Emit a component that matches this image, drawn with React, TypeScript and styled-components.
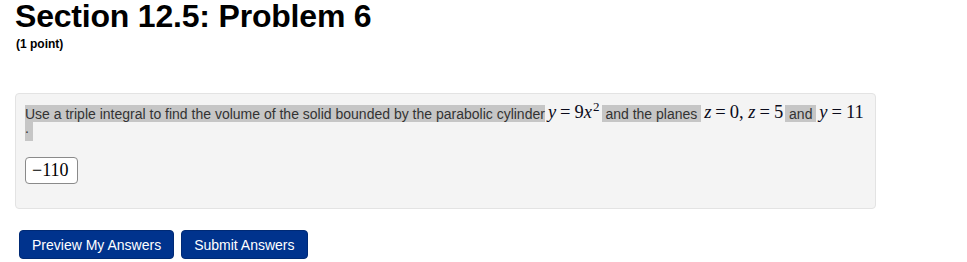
import styled, { createGlobalStyle } from 'styled-components'

const GlobalStyle = createGlobalStyle`
  body {
    margin: 0;
    background: #ffffff;
    font-family: Arial, "Liberation Sans", sans-serif;
    color: #000;
  }
`

const Page = styled.div`
  padding: 0 15px;
`

const Title = styled.h1`
  margin: 0;
  font-size: 32px;
  line-height: 32px;
  font-weight: bold;
  letter-spacing: -0.2px;
`

const Points = styled.div`
  margin-top: 5px;
  padding-left: 1px;
  font-size: 12px;
  font-weight: bold;
  line-height: 14px;
`

const ProblemPanel = styled.div`
  margin-top: 42px;
  width: 861px;
  height: 116px;
  box-sizing: border-box;
  padding: 11px 9px;
  background: #f4f4f4;
  border: 1px solid #e3e3e3;
  border-radius: 4px;
`

const Statement = styled.div`
  font-size: 14px;
  line-height: 17px;
  color: #333;
`

const Marked = styled.span`
  background: #c6c6c6;
  padding: 0.5px 0;
`

const MathText = styled.span`
  font-family: "Liberation Serif", "DejaVu Serif", serif;
  font-size: 18.5px;
  line-height: 0;
  color: #0a0a1a;
  margin: 0 2px 0 3px;
`

const Var = styled.i`
  font-style: italic;
`

const Rel = styled.span`
  margin: 0 4px;
`

const Sup = styled.sup`
  font-size: 13px;
  line-height: 0;
  vertical-align: 0.55em;
  margin-left: 1px;
`

const Dot = styled.div`
  width: 8px;
  height: 19px;
  background: #c6c6c6;
  font-size: 14px;
  line-height: 12px;
  color: #333;
`

const AnswerBox = styled.div`
  display: inline-flex;
  align-items: center;
  margin-top: 16px;
  height: 27px;
  box-sizing: border-box;
  padding: 0 9px 0 6px;
  background: #fff;
  border: 1px solid #8a8a8a;
  border-radius: 4px;
  font-family: "Liberation Serif", "DejaVu Serif", serif;
  font-size: 18px;
  color: #000;
`

const Buttons = styled.div`
  display: flex;
  gap: 7px;
  margin-top: 21px;
  padding-left: 4px;
`

const Button = styled.button`
  height: 29px;
  padding: 0 12px;
  background: #00338d;
  color: #fff;
  border: 1px solid #002a75;
  border-radius: 4px;
  font-family: Arial, "Liberation Sans", sans-serif;
  font-size: 14px;
`

export default function App() {
  return (
    <>
      <GlobalStyle />
      <Page>
        <Title>Section 12.5: Problem 6</Title>
        <Points>(1 point)</Points>
        <ProblemPanel>
          <Statement>
            <Marked>
              Use a triple integral to find the volume of the solid bounded by the parabolic cylinder
            </Marked>
            <MathText>
              <Var>y</Var>
              <Rel>=</Rel>9<Var>x</Var>
              <Sup>2</Sup>
            </MathText>
            <Marked> and the planes </Marked>
            <MathText>
              <Var>z</Var>
              <Rel>=</Rel>0, <Var>z</Var>
              <Rel>=</Rel>5
            </MathText>
            <Marked> and </Marked>
            <MathText>
              <Var>y</Var>
              <Rel>=</Rel>11
            </MathText>
            <Dot>.</Dot>
          </Statement>
          <AnswerBox>−110</AnswerBox>
        </ProblemPanel>
        <Buttons>
          <Button>Preview My Answers</Button>
          <Button>Submit Answers</Button>
        </Buttons>
      </Page>
    </>
  )
}
